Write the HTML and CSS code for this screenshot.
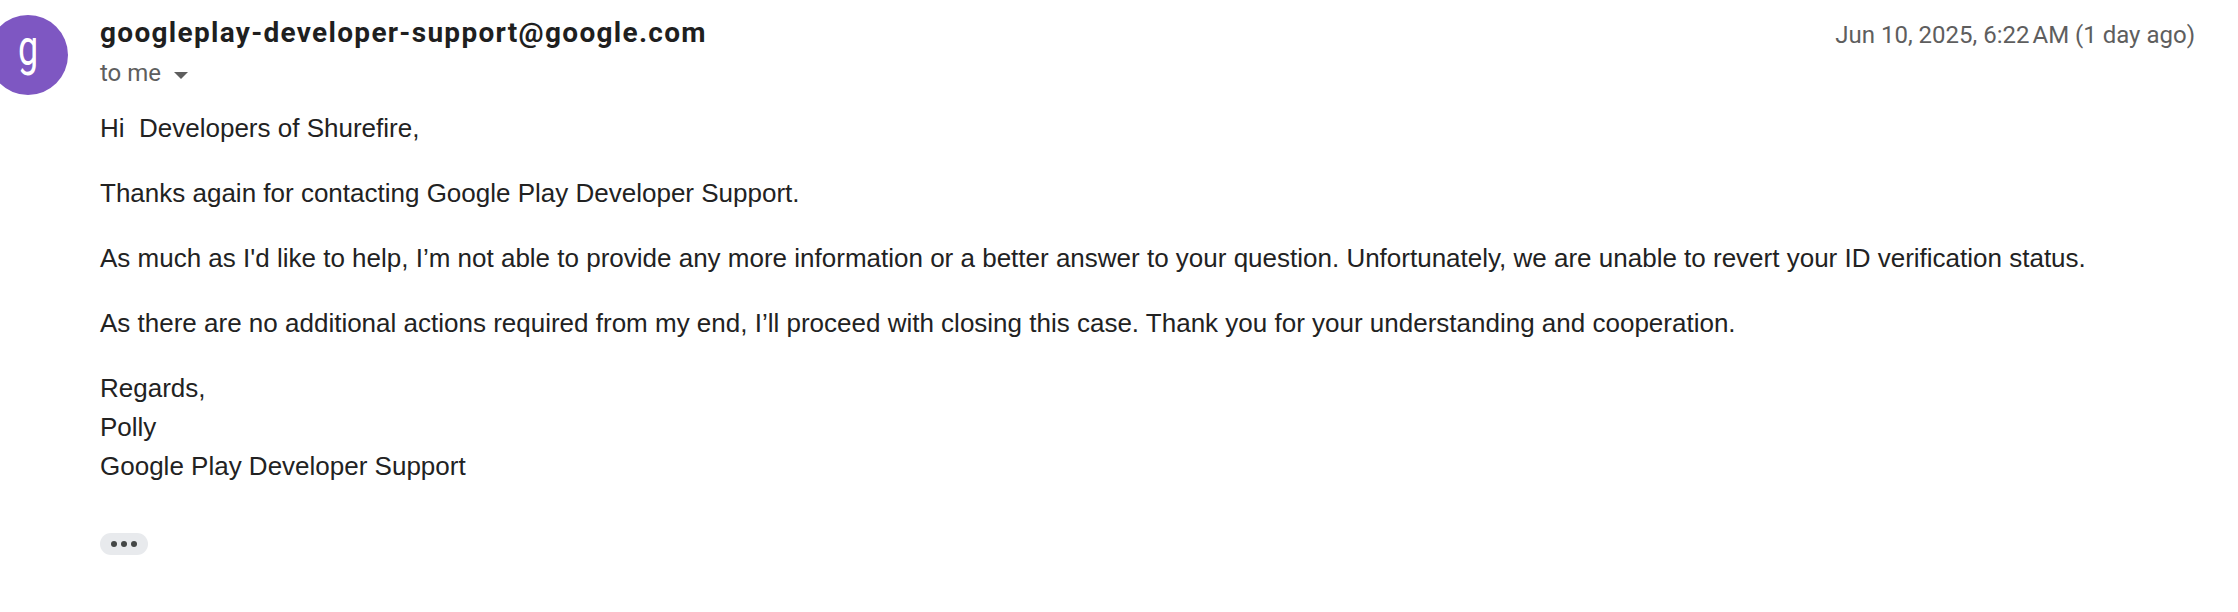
FILE: index.html
```html
<!DOCTYPE html>
<html lang="en">
<head>
<meta charset="utf-8">
<title>Email</title>
<link rel="stylesheet" href="styles.css">
</head>
<body>
<div class="msg">
  <div class="avatar"><span class="avatar-letter">g</span></div>
  <div class="main">
    <div class="head">
      <div class="who">
        <div class="sender">googleplay-developer-support@google.com</div>
        <div class="to">to me <span class="caret"></span></div>
      </div>
      <div class="date">Jun 10, 2025, 6:22&#8239;AM (1 day ago)</div>
    </div>
    <div class="body">
      <p>Hi&nbsp; Developers of Shurefire,</p>
      <p>Thanks again for contacting Google Play Developer Support.</p>
      <p>As much as I'd like to help, I’m not able to provide any more information or a better answer to your question. Unfortunately, we are unable to revert your ID verification status.</p>
      <p>As there are no additional actions required from my end, I’ll proceed with closing this case. Thank you for your understanding and cooperation.</p>
      <p class="sig">Regards,<br>Polly<br>Google Play Developer Support</p>
      <div class="more"><span class="dot"></span><span class="dot"></span><span class="dot"></span></div>
    </div>
  </div>
</div>
</body>
</html>
```
FILE: styles.css
```css
html, body {
  margin: 0;
  padding: 0;
  background: #ffffff;
}
body {
  font-family: Roboto, "Noto Sans", sans-serif;
  overflow: hidden;
}
.msg {
  display: flex;
  align-items: flex-start;
  padding-top: 15px;
}
.avatar {
  flex: none;
  width: 80px;
  height: 80px;
  margin-left: -12px;
  border-radius: 50%;
  background: #7e57c2;
  display: flex;
  align-items: center;
  justify-content: center;
  overflow: hidden;
}
.avatar-letter {
  color: #ffffff;
  font-family: Roboto, sans-serif;
  font-size: 50px;
  line-height: 50px;
  display: inline-block;
  transform: scaleX(0.72);
  margin-top: -14px;
}
.main {
  flex: 1;
  margin-left: 32px;
  padding-right: 43px;
}
.head {
  display: flex;
  justify-content: space-between;
  align-items: flex-start;
}
.sender {
  margin-top: 0;
  font-size: 28px;
  line-height: 36px;
  font-weight: 700;
  letter-spacing: 1.3px;
  color: #1f1f1f;
  white-space: nowrap;
}
.to {
  margin-top: 7px;
  font-size: 24px;
  line-height: 30px;
  color: #5e5e5e;
  display: flex;
  align-items: center;
}
.caret {
  display: inline-block;
  width: 0;
  height: 0;
  margin-left: 13px;
  margin-top: 4px;
  border-left: 7px solid transparent;
  border-right: 7px solid transparent;
  border-top: 7px solid #5e5e5e;
}
.date {
  margin-top: 2px;
  font-size: 24px;
  line-height: 36px;
  color: #5e5e5e;
  white-space: nowrap;
}
.body {
  margin-top: 21px;
  font-family: "Liberation Sans", Arial, sans-serif;
  font-size: 26px;
  line-height: 39px;
  color: #222222;
}
.body p {
  margin: 0 0 26px 0;
}
.body p.sig {
  margin-bottom: 0;
}
.more {
  margin-top: 47px;
  width: 48px;
  height: 22px;
  border-radius: 11px;
  background: #e8eaed;
  display: flex;
  align-items: center;
  justify-content: center;
  gap: 4px;
}
.dot {
  width: 6px;
  height: 6px;
  border-radius: 50%;
  background: #444746;
}
```
